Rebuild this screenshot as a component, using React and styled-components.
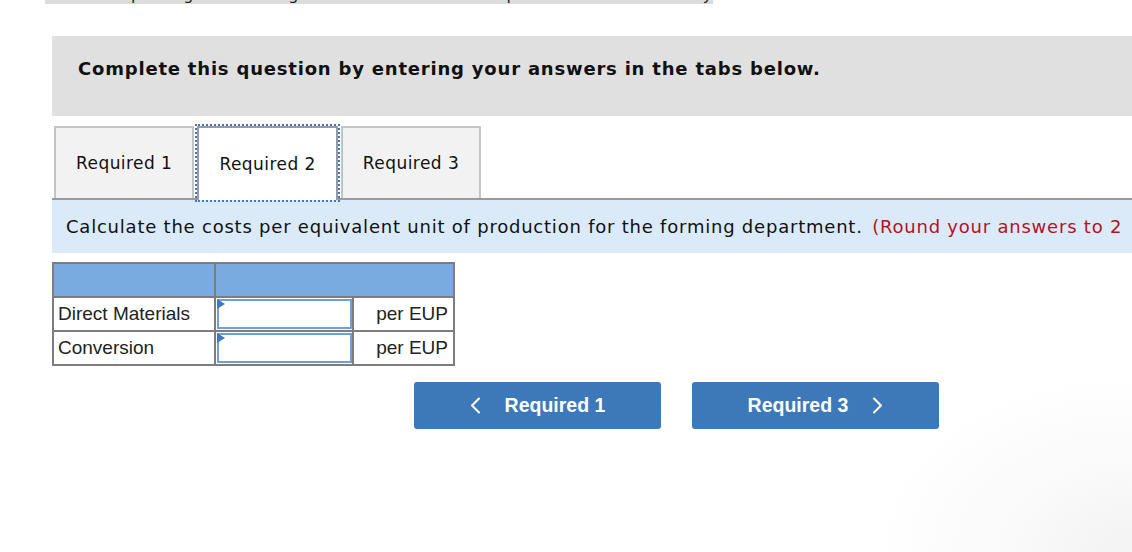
import React from "react";
import styled, { createGlobalStyle } from "styled-components";

const GlobalStyle = createGlobalStyle`
  html, body {
    margin: 0;
    padding: 0;
    background: #fff;
  }
  body {
    width: 1132px;
    height: 552px;
    overflow: hidden;
    font-family: "DejaVu Sans", Verdana, sans-serif;
    background: radial-gradient(ellipse 260px 180px at 1132px 552px, #f3f3f3 0%, #fafafa 50%, #ffffff 100%);
  }
`;

const verdana = `"DejaVu Sans", Verdana, sans-serif`;
const arial = `"Liberation Sans", Arial, Helvetica, sans-serif`;

const TopStrip = styled.div`
  margin-left: 45px;
  width: 668px;
  height: 4px;
  background: #dcdcdc;
  overflow: hidden;
`;

const Descenders = styled.div`
  display: flex;
  font-family: ${verdana};
  font-size: 16px;
  line-height: 16px;
  margin-top: -13px;
  color: #222;
`;

const Glyph = styled.span`
  margin-left: ${(p) => p.$gap}px;
`;

const Page = styled.div`
  padding: 32px 0 0 52px;
`;

const Prompt = styled.div`
  height: 80px;
  background: #e0e0e0;
  display: flex;
  align-items: center;
  padding-left: 26px;
  padding-bottom: 15px;
  box-sizing: border-box;
  font-family: ${verdana};
  font-weight: bold;
  font-size: 18px;
  letter-spacing: 0.8px;
  color: #111;
  white-space: nowrap;
`;

const TabBar = styled.div`
  display: flex;
  gap: 3px;
  margin-top: 10px;
  padding-left: 2px;
  border-bottom: 2px solid #9a9a9a;
  height: 72px;
`;

const Tab = styled.div`
  height: 72px;
  box-sizing: border-box;
  padding: 0 20px;
  display: flex;
  align-items: center;
  font-family: ${verdana};
  font-size: 17px;
  letter-spacing: 0.45px;
  color: #111;
  white-space: nowrap;
  background: ${(p) => (p.$active ? "#fff" : "#f2f2f2")};
  border: 2px solid ${(p) => (p.$active ? "#9a9a9a" : "#c4c4c4")};
  border-bottom: none;
  outline: ${(p) => (p.$active ? "2px dotted #3d78c0" : "none")};
  ${(p) => p.$active && `height: 74px; margin-bottom: -2px;`}
`;

const Instruction = styled.div`
  width: 1100px;
  height: 53px;
  box-sizing: border-box;
  background: #dbeaf8;
  padding-left: 14px;
  font-family: ${verdana};
  font-size: 18px;
  line-height: 53px;
  letter-spacing: 0.78px;
  color: #111;
  overflow: hidden;
`;

const Note = styled.span`
  color: #b5121b;
  margin-left: 3px;
`;

const Grid = styled.div`
  margin-top: 9px;
  width: 403px;
  display: grid;
  grid-template-columns: 160px 136px 99px;
  border: 2px solid #7d7d7d;
  box-sizing: border-box;
  background: #7d7d7d;
  gap: 2px;
`;

const Head = styled.div`
  height: 32px;
  background: #7aabe0;
  grid-column: span ${(p) => p.$span || 1};
`;

const Cell = styled.div`
  height: 32px;
  background: #fff;
  display: flex;
  align-items: center;
  justify-content: ${(p) => (p.$right ? "flex-end" : "flex-start")};
  padding: 0 ${(p) => (p.$right ? "5px" : "4px")};
  font-family: ${arial};
  font-size: 19px;
  color: #222;
  white-space: nowrap;
`;

const InputCell = styled.div`
  height: 32px;
  background: #fff;
  padding: 1px 0 1px 1px;
  box-sizing: border-box;
  position: relative;
`;

const Field = styled.input`
  display: block;
  width: 100%;
  height: 100%;
  box-sizing: border-box;
  border: 2px solid #6e9fd8;
  outline: none;
  margin: 0;
  background: #fff;
`;

const Flag = styled.span`
  position: absolute;
  left: 1px;
  top: 1px;
  width: 0;
  height: 0;
  border-top: 5px solid transparent;
  border-bottom: 5px solid transparent;
  border-left: 8px solid #3d78b8;
`;

const Nav = styled.div`
  display: flex;
  gap: 31px;
  margin: 16px 0 0 362px;
`;

const NavButton = styled.button`
  width: 247px;
  height: 47px;
  border: none;
  border-radius: 3px;
  background: #3d78b8;
  color: #fff;
  font-family: ${arial};
  font-weight: bold;
  font-size: 19.5px;
  display: flex;
  align-items: center;
  justify-content: center;
  gap: 24px;
  padding: 0;
  cursor: pointer;
`;

const Chevron = ({ dir }) => (
  <svg width="11" height="17" viewBox="0 0 11 17" fill="none">
    <path
      d={dir === "left" ? "M9 1.5 L2 8.5 L9 15.5" : "M2 1.5 L9 8.5 L2 15.5"}
      stroke="#fff"
      strokeWidth="2"
      strokeLinecap="round"
      strokeLinejoin="round"
    />
  </svg>
);

const rows = ["Direct Materials", "Conversion"];

export default function App() {
  return (
    <>
      <GlobalStyle />
      <TopStrip>
        <Descenders>
          <Glyph $gap={86}>p</Glyph>
          <Glyph $gap={42}>g</Glyph>
          <Glyph $gap={95}>g</Glyph>
          <Glyph $gap={208}>p</Glyph>
          <Glyph $gap={186}>y</Glyph>
        </Descenders>
      </TopStrip>
      <Page>
        <Prompt>Complete this question by entering your answers in the tabs below.</Prompt>
        <TabBar>
          <Tab>Required 1</Tab>
          <Tab $active>Required 2</Tab>
          <Tab>Required 3</Tab>
        </TabBar>
        <Instruction>
          Calculate the costs per equivalent unit of production for the forming department.{" "}
          <Note>(Round your answers to 2 decimal places.)</Note>
        </Instruction>
        <Grid>
          <Head />
          <Head $span={2} />
          {rows.map((r) => (
            <React.Fragment key={r}>
              <Cell>{r}</Cell>
              <InputCell>
                <Field type="text" />
                <Flag />
              </InputCell>
              <Cell $right>per EUP</Cell>
            </React.Fragment>
          ))}
        </Grid>
        <Nav>
          <NavButton>
            <Chevron dir="left" />
            Required 1
          </NavButton>
          <NavButton>
            Required 3
            <Chevron dir="right" />
          </NavButton>
        </Nav>
      </Page>
    </>
  );
}
